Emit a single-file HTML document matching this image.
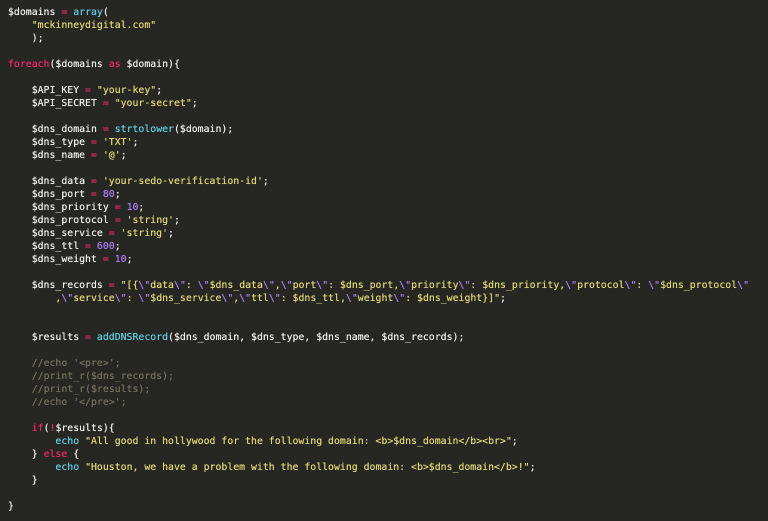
<!DOCTYPE html>
<html><head><meta charset="utf-8"><style>
html,body{margin:0;padding:0;background:#262622;width:768px;height:521px;overflow:hidden}
pre{margin:0;padding:6px 0 0 8px;font-family:"DejaVu Sans Mono","Liberation Mono",monospace;font-size:9.86px;line-height:13px;color:#f4f4ee;text-shadow:0 0 0.4px currentColor}
.k{color:#f0276f}.f{color:#62cfe4}.s{color:#e2d879}.n{color:#ab7ff6}.c{color:#75715e}.e{color:#ab7ff6}
</style></head><body><pre>$domains <span class="k">=</span> <span class="f">array</span>(
    <span class="s">"mckinneydigital.com"</span>
    );

<span class="k">foreach</span>($domains <span class="k">as</span> $domain){

    $API_KEY <span class="k">=</span> <span class="s">"your-key"</span>;
    $API_SECRET <span class="k">=</span> <span class="s">"your-secret"</span>;

    $dns_domain <span class="k">=</span> <span class="f">strtolower</span>($domain);
    $dns_type <span class="k">=</span> <span class="s">'TXT'</span>;
    $dns_name <span class="k">=</span> <span class="s">'@'</span>;

    $dns_data <span class="k">=</span> <span class="s">'your-sedo-verification-id'</span>;
    $dns_port <span class="k">=</span> <span class="n">80</span>;
    $dns_priority <span class="k">=</span> <span class="n">10</span>;
    $dns_protocol <span class="k">=</span> <span class="s">'string'</span>;
    $dns_service <span class="k">=</span> <span class="s">'string'</span>;
    $dns_ttl <span class="k">=</span> <span class="n">600</span>;
    $dns_weight <span class="k">=</span> <span class="n">10</span>;

    $dns_records <span class="k">=</span> <span class="s">"[{<span class="e">\"</span>data<span class="e">\"</span>: <span class="e">\"</span>$dns_data<span class="e">\"</span>,<span class="e">\"</span>port<span class="e">\"</span>: $dns_port,<span class="e">\"</span>priority<span class="e">\"</span>: $dns_priority,<span class="e">\"</span>protocol<span class="e">\"</span>: <span class="e">\"</span>$dns_protocol<span class="e">\"</span>
        ,<span class="e">\"</span>service<span class="e">\"</span>: <span class="e">\"</span>$dns_service<span class="e">\"</span>,<span class="e">\"</span>ttl<span class="e">\"</span>: $dns_ttl,<span class="e">\"</span>weight<span class="e">\"</span>: $dns_weight}]"</span>;


    $results <span class="k">=</span> <span class="f">addDNSRecord</span>($dns_domain, $dns_type, $dns_name, $dns_records);

    <span class="c">//echo '&lt;pre&gt;';</span>
    <span class="c">//print_r($dns_records);</span>
    <span class="c">//print_r($results);</span>
    <span class="c">//echo '&lt;/pre&gt;';</span>

    <span class="k">if</span>(<span class="k">!</span>$results){
        <span class="f">echo</span> <span class="s">"All good in hollywood for the following domain: &lt;b&gt;$dns_domain&lt;/b&gt;&lt;br&gt;"</span>;
    } <span class="k">else</span> {
        <span class="f">echo</span> <span class="s">"Houston, we have a problem with the following domain: &lt;b&gt;$dns_domain&lt;/b&gt;!"</span>;
    }

}</pre></body></html>
